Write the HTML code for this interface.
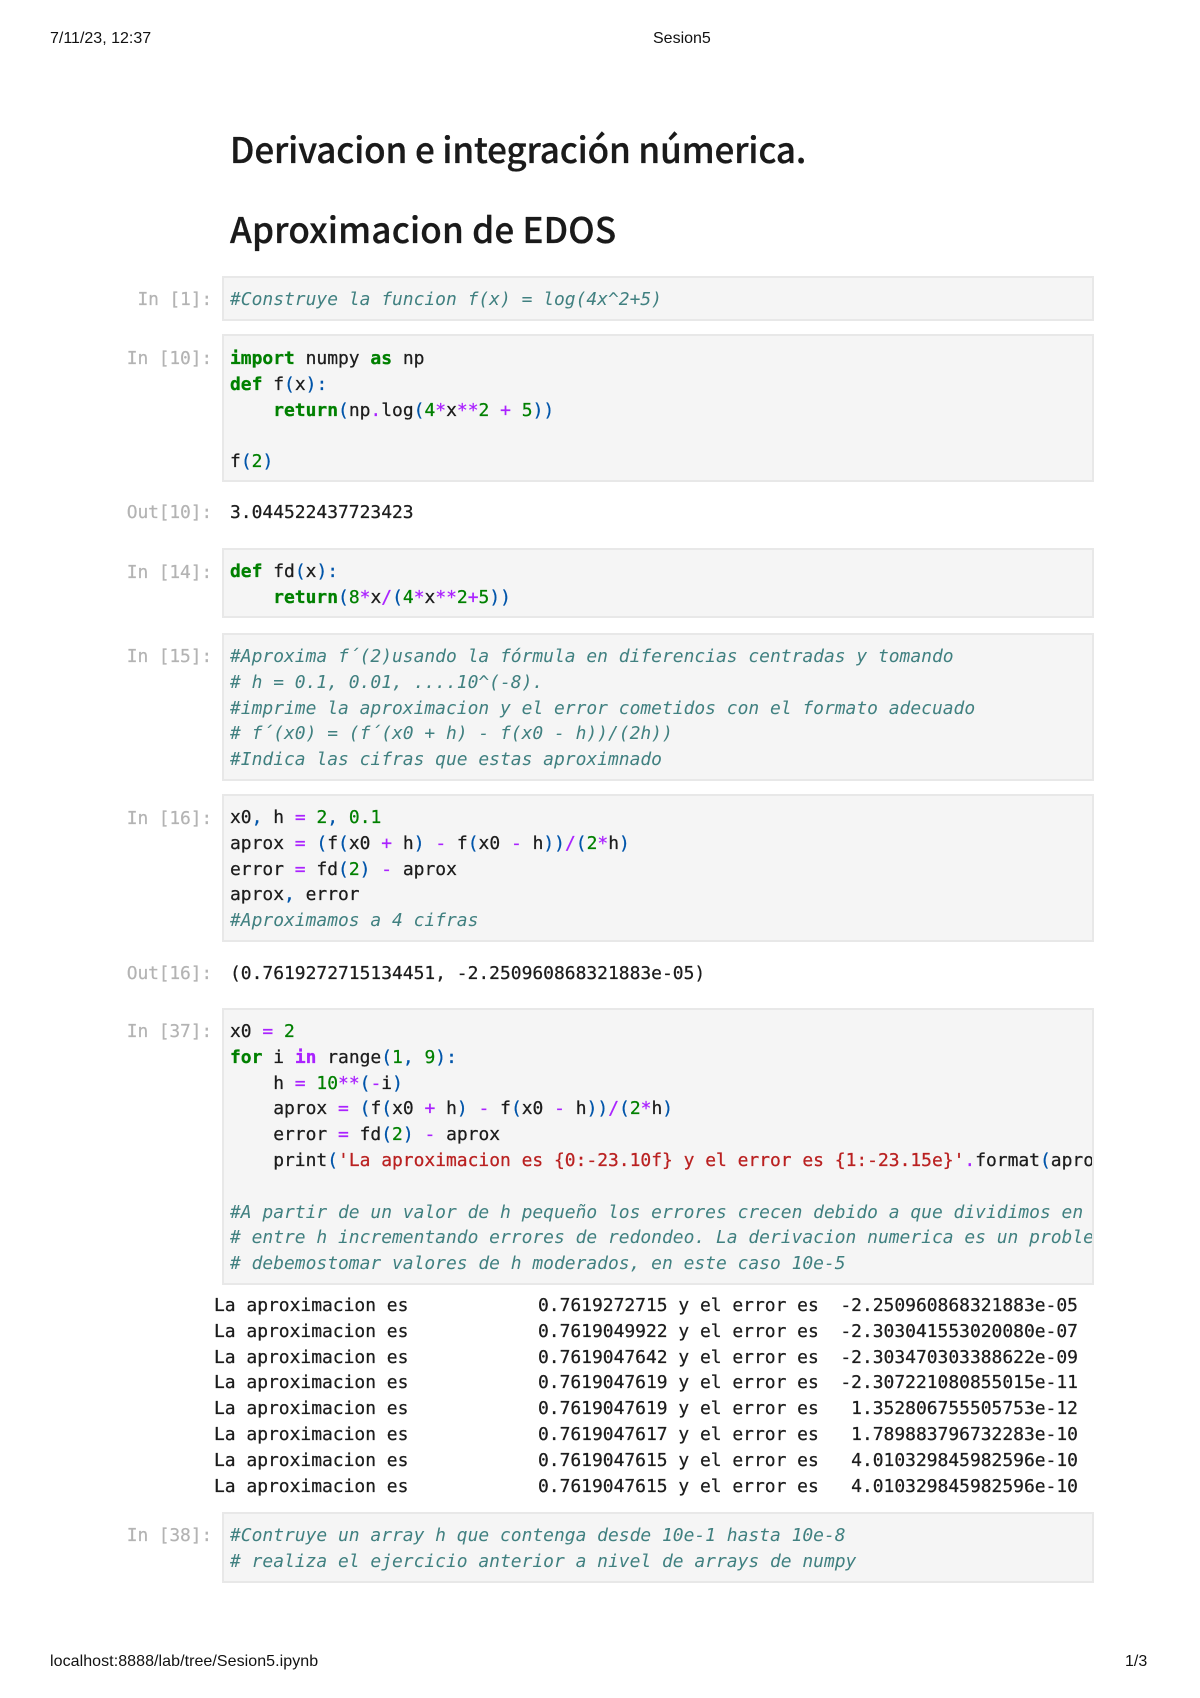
<!DOCTYPE html>
<html lang="es">
<head>
<meta charset="utf-8">
<title>Sesion5</title>
<style>
html,body{margin:0;padding:0;background:#fff;}
body{width:1200px;height:1698px;position:relative;overflow:hidden;}
.hf{position:absolute;font:16px/20px "Liberation Sans",sans-serif;color:#111;white-space:pre;}
h1{position:absolute;left:230px;margin:0;font-family:"Noto Sans CJK SC","Liberation Sans",sans-serif;font-weight:500;font-size:35px;line-height:50px;color:#1a1a1a;white-space:pre;-webkit-text-stroke:.3px #1a1a1a;}
.box{position:absolute;left:222px;width:868px;background:#f5f5f5;border:2px solid #e8e8e8;box-sizing:content-box;overflow:hidden;}
pre{margin:0;position:absolute;font-family:"DejaVu Sans Mono","Liberation Mono",monospace;font-size:17.95px;line-height:25.8px;color:#1c1c1c;white-space:pre;-webkit-text-stroke:.25px currentColor;}
.box pre{left:6px;}
.code{left:230px;}
.pr{position:absolute;right:988px;text-align:right;font-family:"DejaVu Sans Mono","Liberation Mono",monospace;font-size:17.95px;line-height:25.8px;color:#b3b3b3;white-space:pre;letter-spacing:-.15px;-webkit-text-stroke:.2px #b3b3b3;}
.k{color:#008000;font-weight:bold;}
.n{color:#008000;}
.o{color:#aa22ff;}
.w{color:#aa22ff;font-weight:bold;}
.p{color:#0055aa;}
.c{color:#408080;font-style:italic;-webkit-text-stroke:0;}
.s{color:#ba2121;}
</style>
</head>
<body>
<div class="hf" style="left:50px;top:29px">7/11/23, 12:37</div>
<div class="hf" style="left:653px;top:29px">Sesion5</div>
<h1 style="top:124px;letter-spacing:-.14px">Derivacion e integración númerica.</h1>
<h1 style="top:204px;letter-spacing:.2px">Aproximacion de EDOS</h1>

<div class="pr" style="top:287px">In [1]:</div>
<div class="box" style="top:276px;height:41px"><pre style="top:9px"><span class="c">#Construye la funcion f(x) = log(4x^2+5)</span></pre></div>

<div class="pr" style="top:346px">In [10]:</div>
<div class="box" style="top:334px;height:144px"><pre style="top:10px"><span class="k">import</span> numpy <span class="k">as</span> np
<span class="k">def</span> f<span class="p">(</span>x<span class="p">):</span>
    <span class="k">return</span><span class="p">(</span>np<span class="o">.</span>log<span class="p">(</span><span class="n">4</span><span class="o">*</span>x<span class="o">**</span><span class="n">2</span> <span class="o">+</span> <span class="n">5</span><span class="p">))</span>

f<span class="p">(</span><span class="n">2</span><span class="p">)</span></pre></div>

<div class="pr" style="top:500px">Out[10]:</div>
<pre class="code" style="top:500px">3.044522437723423</pre>

<div class="pr" style="top:560px">In [14]:</div>
<div class="box" style="top:548px;height:66px"><pre style="top:9px"><span class="k">def</span> fd<span class="p">(</span>x<span class="p">):</span>
    <span class="k">return</span><span class="p">(</span><span class="n">8</span><span class="o">*</span>x<span class="o">/</span><span class="p">(</span><span class="n">4</span><span class="o">*</span>x<span class="o">**</span><span class="n">2</span><span class="o">+</span><span class="n">5</span><span class="p">))</span></pre></div>

<div class="pr" style="top:644px">In [15]:</div>
<div class="box" style="top:633px;height:144px"><pre style="top:9px"><span class="c">#Aproxima f´(2)usando la fórmula en diferencias centradas y tomando
# h = 0.1, 0.01, ....10^(-8).
#imprime la aproximacion y el error cometidos con el formato adecuado
# f´(x0) = (f´(x0 + h) - f(x0 - h))/(2h))
#Indica las cifras que estas aproximnado</span></pre></div>

<div class="pr" style="top:806px">In [16]:</div>
<div class="box" style="top:794px;height:144px"><pre style="top:9px">x0<span class="p">,</span> h <span class="o">=</span> <span class="n">2</span><span class="p">,</span> <span class="n">0.1</span>
aprox <span class="o">=</span> <span class="p">(</span>f<span class="p">(</span>x0 <span class="o">+</span> h<span class="p">)</span> <span class="o">-</span> f<span class="p">(</span>x0 <span class="o">-</span> h<span class="p">))</span><span class="o">/</span><span class="p">(</span><span class="n">2</span><span class="o">*</span>h<span class="p">)</span>
error <span class="o">=</span> fd<span class="p">(</span><span class="n">2</span><span class="p">)</span> <span class="o">-</span> aprox
aprox<span class="p">,</span> error
<span class="c">#Aproximamos a 4 cifras</span></pre></div>

<div class="pr" style="top:961px">Out[16]:</div>
<pre class="code" style="top:961px">(0.7619272715134451, -2.250960868321883e-05)</pre>

<div class="pr" style="top:1019px">In [37]:</div>
<div class="box" style="top:1008px;height:273px"><pre style="top:9px">x0 <span class="o">=</span> <span class="n">2</span>
<span class="k">for</span> i <span class="w">in</span> range<span class="p">(</span><span class="n">1</span><span class="p">,</span> <span class="n">9</span><span class="p">):</span>
    h <span class="o">=</span> <span class="n">10</span><span class="o">**</span><span class="p">(</span><span class="o">-</span>i<span class="p">)</span>
    aprox <span class="o">=</span> <span class="p">(</span>f<span class="p">(</span>x0 <span class="o">+</span> h<span class="p">)</span> <span class="o">-</span> f<span class="p">(</span>x0 <span class="o">-</span> h<span class="p">))</span><span class="o">/</span><span class="p">(</span><span class="n">2</span><span class="o">*</span>h<span class="p">)</span>
    error <span class="o">=</span> fd<span class="p">(</span><span class="n">2</span><span class="p">)</span> <span class="o">-</span> aprox
    print<span class="p">(</span><span class="s">'La aproximacion es {0:-23.10f} y el error es {1:-23.15e}'</span><span class="o">.</span>format<span class="p">(</span>aprox<span class="p">,</span> error<span class="p">))</span>

<span class="c">#A partir de un valor de h pequeño los errores crecen debido a que dividimos en
# entre h incrementando errores de redondeo. La derivacion numerica es un problema inestable
# debemostomar valores de h moderados, en este caso 10e-5</span></pre></div>

<pre style="left:214px;top:1293px">La aproximacion es            0.7619272715 y el error es  -2.250960868321883e-05
La aproximacion es            0.7619049922 y el error es  -2.303041553020080e-07
La aproximacion es            0.7619047642 y el error es  -2.303470303388622e-09
La aproximacion es            0.7619047619 y el error es  -2.307221080855015e-11
La aproximacion es            0.7619047619 y el error es   1.352806755505753e-12
La aproximacion es            0.7619047617 y el error es   1.789883796732283e-10
La aproximacion es            0.7619047615 y el error es   4.010329845982596e-10
La aproximacion es            0.7619047615 y el error es   4.010329845982596e-10</pre>

<div class="pr" style="top:1523px">In [38]:</div>
<div class="box" style="top:1512px;height:67px"><pre style="top:9px"><span class="c">#Contruye un array h que contenga desde 10e-1 hasta 10e-8
# realiza el ejercicio anterior a nivel de arrays de numpy</span></pre></div>

<div class="hf" style="left:50px;top:1652px;letter-spacing:.06px">localhost:8888/lab/tree/Sesion5.ipynb</div>
<div class="hf" style="left:1125px;top:1652px">1/3</div>
</body>
</html>
